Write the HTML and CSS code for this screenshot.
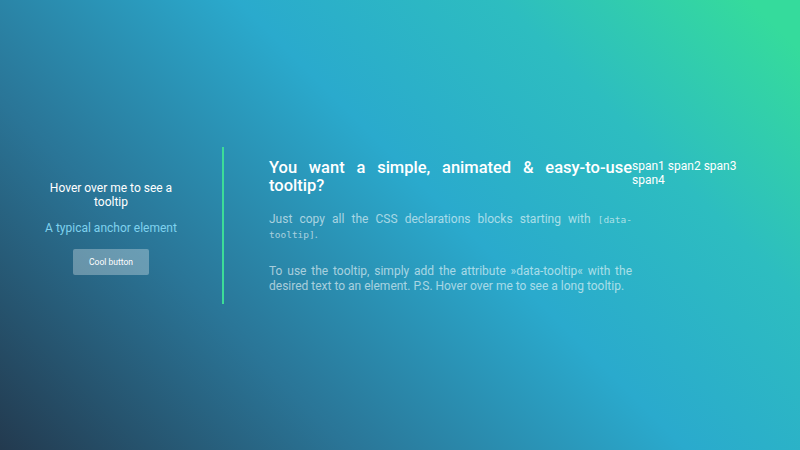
FILE: index.html
```html
<!DOCTYPE html>
<html>

<head>
    <meta charset="UTF-8" />
    <meta name="viewport" content="width=device-width, initial-scale=1.0">
    <title>Tooltip</title>
    <link rel="stylesheet" href="styles.css">
</head>

<body>
    <div class="page">
        <!-- 左侧示例 -->
        <div class="side">
            <p class="hover-me">Hover over me to see a tooltip</p>
            <a class="anchor" href="javascript:;">A typical anchor element</a>
            <button class="cool-btn">Cool button</button>
        </div>
        <!-- 说明 -->
        <div class="main">
            <h1 class="title">You want a simple, animated &amp; easy-to-use tooltip?</h1>
            <p class="text">Just copy all the CSS declarations blocks starting with <code>[data-tooltip]</code>.</p>
            <p class="text">To use the tooltip, simply add the attribute »data-tooltip« with the desired text to an element. P.S. Hover over me to see a long tooltip.</p>
        </div>
        <div class="spans">
            <span>span1</span> <span>span2</span> <span>span3</span> <span>span4</span>
        </div>
    </div>
</body>

</html>
```

FILE: styles.css
```css
* {
    margin: 0px;
    padding: 0px;
}

body {
    width: 800px;
    height: 450px;
    overflow: hidden;
    font-family: Roboto, "Liberation Sans", sans-serif;
    color: #fff;
    /* 背景渐变: 左下深色, 中间青色, 右上绿色 */
    background: linear-gradient(45deg, #233a4f 0%, #2a7597 28%, #2aaacd 55%, #2dbdc0 76%, #35db9c 96%);
}

.page {
    height: 450px;
    display: flex;
    align-items: center;
}

.side {
    width: 222px;
    display: flex;
    flex-direction: column;
    align-items: center;
    text-align: center;
    padding-top: 5px;
}

.hover-me {
    width: 140px;
    font-size: 12px;
    line-height: 14px;
}

.anchor {
    margin-top: 12px;
    font-size: 12px;
    line-height: 14px;
    color: #7fd2ee;
    text-decoration: none;
}

.cool-btn {
    margin-top: 14px;
    width: 76px;
    height: 26px;
    border: none;
    border-radius: 2px;
    background-color: rgba(255, 255, 255, 0.3);
    color: #fff;
    font-family: Roboto, "Liberation Sans", sans-serif;
    font-size: 8.5px;
}

/* 中间说明块 */

.main {
    width: 363px;
    border-left: 2px solid #3ddc97;
    padding: 12px 0 10px 45px;
}

.title {
    font-size: 16.5px;
    font-weight: 500;
    line-height: 18px;
    text-align: justify;
}

.text {
    margin-top: 17px;
    font-size: 12px;
    line-height: 15px;
    color: rgba(255, 255, 255, 0.6);
    text-align: justify;
}

.text + .text {
    margin-top: 22px;
}

.text code {
    font-family: "DejaVu Sans Mono", monospace;
    font-size: 9.5px;
    line-height: 12px;
}

/* 右侧 span */

.spans {
    width: 112px;
    align-self: flex-start;
    margin-top: 159px;
    font-size: 12px;
    line-height: 14px;
}
```
